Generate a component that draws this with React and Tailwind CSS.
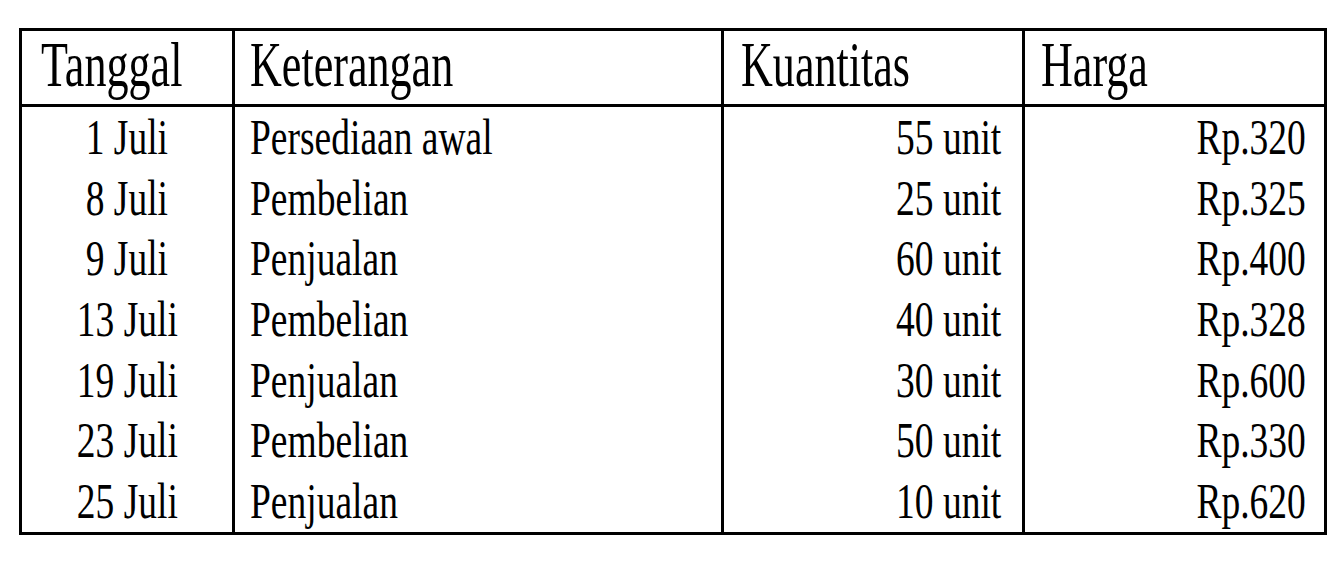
import React from "react";

const rows = [
  { tanggal: "1 Juli", ket: "Persediaan awal", qty: "55 unit", harga: "Rp.320" },
  { tanggal: "8 Juli", ket: "Pembelian", qty: "25 unit", harga: "Rp.325" },
  { tanggal: "9 Juli", ket: "Penjualan", qty: "60 unit", harga: "Rp.400" },
  { tanggal: "13 Juli", ket: "Pembelian", qty: "40 unit", harga: "Rp.328" },
  { tanggal: "19 Juli", ket: "Penjualan", qty: "30 unit", harga: "Rp.600" },
  { tanggal: "23 Juli", ket: "Pembelian", qty: "50 unit", harga: "Rp.330" },
  { tanggal: "25 Juli", ket: "Penjualan", qty: "10 unit", harga: "Rp.620" },
];

const HeadText = ({ children }) => (
  <span className="inline-block origin-left scale-x-[0.7] whitespace-nowrap">{children}</span>
);

const App = () => {
  return (
    <div className="w-[1341px] h-[561px] bg-white pt-[28px] pl-[19px] font-['Liberation_Serif',serif] text-black">
      <div className="w-[1308px] border-[3px] border-black">
        {/* header */}
        <div className="grid grid-cols-[213px_489px_301px_299px] h-[76px] border-b-[3px] border-black text-[63px] leading-none">
          <div className="border-r-[3px] border-black pt-[3px] pl-[19px]">
            <HeadText>Tanggal</HeadText>
          </div>
          <div className="border-r-[3px] border-black pt-[3px] pl-[15px]">
            <HeadText>Keterangan</HeadText>
          </div>
          <div className="border-r-[3px] border-black pt-[3px] pl-[17px]">
            <HeadText>Kuantitas</HeadText>
          </div>
          <div className="pt-[3px] pl-[16px]">
            <HeadText>Harga</HeadText>
          </div>
        </div>

        {/* body */}
        <div className="grid grid-cols-[213px_489px_301px_299px] text-[50px] leading-none">
          <div className="border-r-[3px] border-black">
            {rows.map((r, i) => (
              <div key={i} className="h-[60.7px] pt-[5px] text-center">
                <span className="inline-block origin-center scale-x-[0.75] whitespace-nowrap">{r.tanggal}</span>
              </div>
            ))}
          </div>
          <div className="border-r-[3px] border-black pl-[15px]">
            {rows.map((r, i) => (
              <div key={i} className="h-[60.7px] pt-[5px]">
                <span className="inline-block origin-left scale-x-[0.75] whitespace-nowrap">{r.ket}</span>
              </div>
            ))}
          </div>
          <div className="border-r-[3px] border-black pr-[21px]">
            {rows.map((r, i) => (
              <div key={i} className="h-[60.7px] pt-[5px] text-right">
                <span className="inline-block origin-right scale-x-[0.75] whitespace-nowrap">{r.qty}</span>
              </div>
            ))}
          </div>
          <div className="pr-[18px]">
            {rows.map((r, i) => (
              <div key={i} className="h-[60.7px] pt-[5px] text-right">
                <span className="inline-block origin-right scale-x-[0.75] whitespace-nowrap">{r.harga}</span>
              </div>
            ))}
          </div>
        </div>
      </div>
    </div>
  );
};

export default App;
